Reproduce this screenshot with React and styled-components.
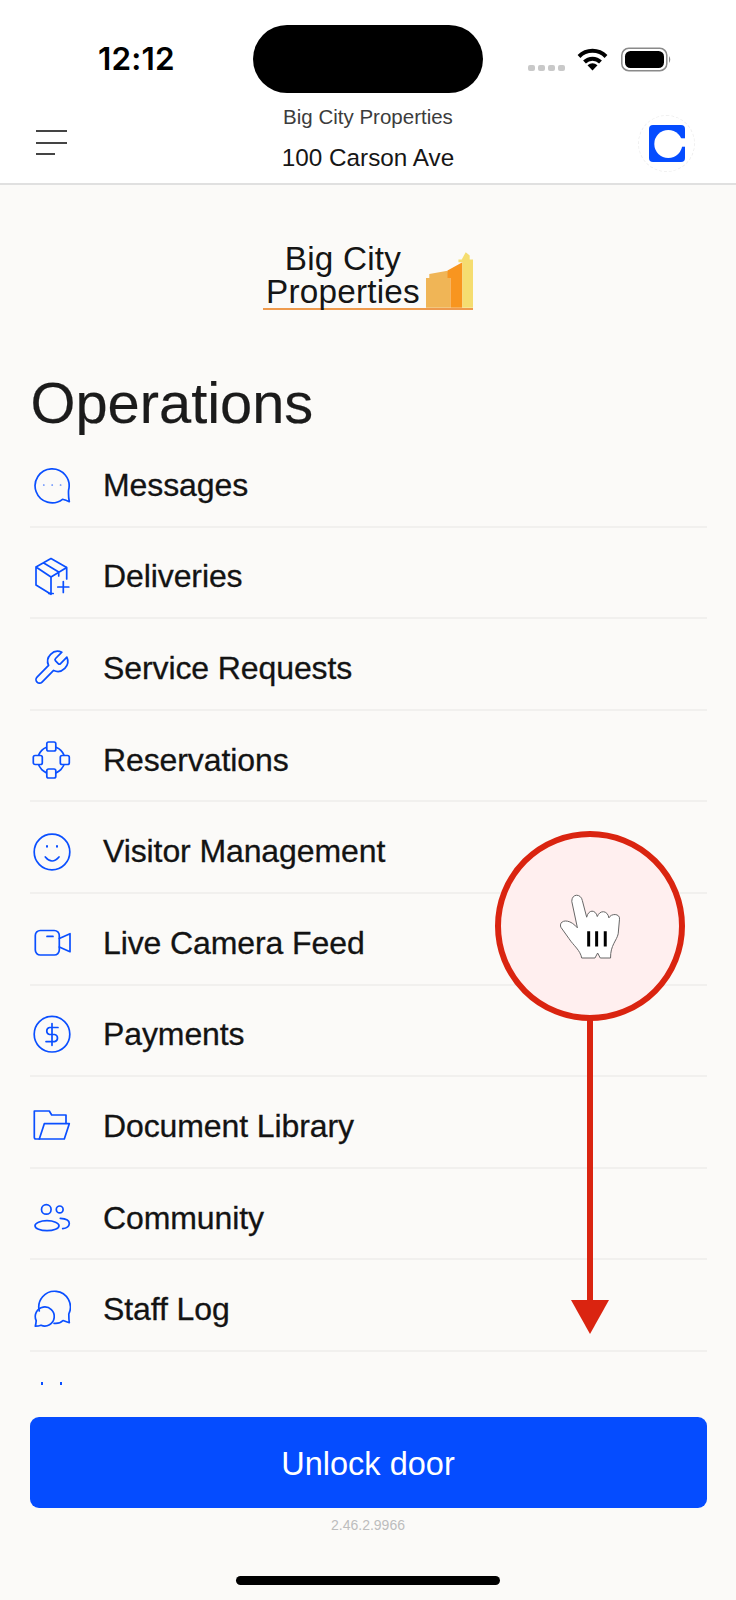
import React from "react";
import styled, { createGlobalStyle } from "styled-components";

const BLUE = "#0a4fff";
const PAGE = "#fbfaf8";
const RED = "#da2410";

const Global = createGlobalStyle`
  html, body { margin: 0; padding: 0; background: ${PAGE}; }
  * { box-sizing: border-box; }
`;

const Page = styled.div`
  position: relative;
  width: 736px;
  height: 1600px;
  overflow: hidden;
  background: ${PAGE};
  color: #111;
  font-family: "Liberation Sans", Arial, sans-serif;
  display: flex;
  flex-direction: column;
`;

const TopBar = styled.header`
  background: #fff;
  border-bottom: 2px solid #e0e0e0;
  height: 185px;
  flex: none;
`;

const StatusBar = styled.div`
  height: 93px;
  padding-top: 25px;
  display: grid;
  grid-template-columns: 253px 230px 1fr;
`;

const Time = styled.div`
  font-family: Inter, sans-serif;
  font-weight: 600;
  font-size: 31.5px;
  line-height: 68px;
  letter-spacing: 0.2px;
  padding-left: 98px;
  color: #000;
`;

const Island = styled.div`
  height: 68px;
  background: #000;
  border-radius: 34px;
`;

const StatusIcons = styled.div`
  display: flex;
  align-items: flex-start;
  padding: 22px 0 0 45px;
`;

const SignalDots = styled.div`
  display: flex;
  gap: 3px;
  margin: 18px 12px 0 0;
`;

const SignalDot = styled.span`
  width: 7px;
  height: 6px;
  border-radius: 2px;
  background: #c9c9c9;
`;

const BatteryIcon = styled.svg`
  margin-left: 13px;
`;

const NavBar = styled.div`
  height: 90px;
  display: grid;
  grid-template-columns: 160px 1fr 160px;
`;

const MenuButton = styled.div`
  display: flex;
  flex-direction: column;
  gap: 9.5px;
  padding: 37px 0 0 36px;
`;

const MenuLine = styled.span`
  display: block;
  height: 2px;
  width: ${(p) => (p.$short ? "19px" : "31px")};
  background: #444;
`;

const NavTitles = styled.div`
  text-align: center;
  padding-top: 11px;
`;

const Subtitle = styled.div`
  font-size: 20.5px;
  line-height: 26px;
  color: #3c3c3c;
`;

const Title = styled.div`
  font-size: 24.3px;
  line-height: 30px;
  margin-top: 13px;
  color: #161616;
`;

const AvatarSlot = styled.div`
  padding: 22px 0 0 62px;
`;

const Avatar = styled.div`
  width: 57px;
  height: 57px;
  border-radius: 50%;
  border: 1px dashed #efefef;
  display: flex;
  align-items: center;
  justify-content: center;
`;

const Main = styled.main`
  flex: 1;
  padding: 0 29.5px;
  display: flex;
  flex-direction: column;
  min-height: 0;
`;

const LogoWrap = styled.div`
  display: flex;
  justify-content: center;
  padding-top: 55px;
  height: 158px;
  flex: none;
`;

const Logo = styled.div`
  width: 210px;
  height: 70px;
  display: flex;
  align-items: flex-end;
  justify-content: space-between;
  border-bottom: 2px solid #ee9a4d;
  padding-left: 2px;
`;

const LogoText = styled.div`
  color: #151515;
  font-size: 33.3px;
  line-height: 33px;
  text-align: center;
  width: 156px;
`;

const LogoLine = styled.div`
  letter-spacing: ${(p) => p.$spacing || "0"};
`;

const Heading = styled.h1`
  margin: 0;
  font-weight: 400;
  font-size: 57.8px;
  line-height: 64px;
  height: 93px;
  padding: 28px 0 0 1px;
  flex: none;
  color: #1b1b1b;
  -webkit-text-stroke: 0.2px #1b1b1b;
`;

const MenuList = styled.ul`
  list-style: none;
  margin: 0;
  padding: 0;
`;

const MenuRow = styled.li`
  height: 91.6px;
  display: flex;
  align-items: center;
  gap: 32px;
  border-bottom: 2px solid #f1f0ee;
  padding: 9px 0 0 1.5px;
  font-size: 32px;
  letter-spacing: -0.1px;
  color: #131313;
  -webkit-text-stroke: 0.3px #131313;
`;

const RowIcon = styled.svg`
  flex: none;
  width: 40px;
  height: 40px;
  fill: none;
  stroke: ${BLUE};
  stroke-width: 1.7;
  stroke-linecap: round;
  stroke-linejoin: round;
`;

const ClippedRow = styled.div`
  display: flex;
  gap: 17px;
  height: 65px;
  padding: 30px 0 0 11px;
  flex: none;
`;

const ClippedDot = styled.span`
  width: 2px;
  height: 3px;
  background: ${BLUE};
`;

const UnlockButton = styled.button`
  display: block;
  width: 677px;
  height: 91px;
  flex: none;
  border: 0;
  border-radius: 9px;
  background: #054cff;
  color: #fff;
  font-family: inherit;
  font-size: 32.5px;
  padding: 5px 0 0 0;
`;

const Version = styled.div`
  text-align: center;
  font-size: 14px;
  line-height: 18px;
  margin-top: 8px;
  color: #bdbdbd;
`;

const HomeBar = styled.div`
  position: absolute;
  left: 236px;
  bottom: 15px;
  width: 264px;
  height: 9px;
  border-radius: 5px;
  background: #000;
`;

const TouchRing = styled.div`
  position: absolute;
  left: 495px;
  top: 831px;
  width: 190px;
  height: 190px;
  border-radius: 50%;
  border: 6px solid ${RED};
  background: #ffefef;
  display: flex;
  align-items: center;
  justify-content: center;
`;

const ArrowShaft = styled.div`
  position: absolute;
  left: 587px;
  top: 1020px;
  width: 6px;
  height: 282px;
  background: ${RED};
`;

const ArrowHead = styled.div`
  position: absolute;
  left: 571px;
  top: 1300px;
  width: 0;
  height: 0;
  border-left: 19.5px solid transparent;
  border-right: 19.5px solid transparent;
  border-top: 34px solid ${RED};
`;

const icons = {
  messages: (
    <>
      <path d="M31.5 34.3A17 17 0 1 1 37.6 25Q37.2 31 38.3 36.7Q35 35.3 31.5 34.3Z" />
      <g strokeWidth="1.2" strokeDasharray="0.6 7.8">
        <path d="M12.5 20H30" />
      </g>
    </>
  ),
  deliveries: (
    <>
      <path d="M35.7 22V10.5L20 1.5L5 10V28L20 37.3V20L5 10M20 20L35.7 10.5M12.3 5.8L27.7 15V19" />
      <path d="M32.3 24.5V35.5M26.8 30H37.8M17.8 36.5H22.2" />
    </>
  ),
  service: (
    <g transform="scale(1.67)" strokeWidth="1.05">
      <path d="M14.7 6.3a1 1 0 0 0 0 1.4l1.6 1.6a1 1 0 0 0 1.4 0l3.77-3.77a6 6 0 0 1-7.94 7.94l-6.91 6.91a2.12 2.12 0 0 1-3-3l6.91-6.91a6 6 0 0 1 7.94-7.94l-3.76 3.76z" />
    </g>
  ),
  reservations: (
    <>
      <circle cx="20.3" cy="20" r="13.5" />
      <g fill={PAGE}>
        <rect x="15.8" y="2" width="9" height="9" rx="1.8" />
        <rect x="15.8" y="29" width="9" height="9" rx="1.8" />
        <rect x="2.3" y="15.5" width="9" height="9" rx="1.8" />
        <rect x="29.3" y="15.5" width="9" height="9" rx="1.8" />
      </g>
    </>
  ),
  visitor: (
    <>
      <circle cx="21" cy="20" r="17.8" />
      <path d="M14.3 25Q21 33 28 25" />
      <path d="M16 14v.8M26 14v.8" strokeWidth="2" />
    </>
  ),
  camera: (
    <>
      <rect x="4.3" y="7.5" width="24" height="24.5" rx="5" />
      <path d="M16 13.4H22M28.3 15.5L39 10.7V28.7L28.3 24" />
    </>
  ),
  payments: (
    <>
      <circle cx="21" cy="19.2" r="17.8" />
      <path d="M27 12.5H18.5A3.6 3.6 0 0 0 18.5 19.5H23.5A3.6 3.6 0 0 1 23.5 26.6H15M21 8.5V30.3" />
    </>
  ),
  documents: (
    <>
      <path d="M8.3 33H5A1.7 1.7 0 0 1 3.3 31.3V5H18.3L20.7 9H35V16.8" />
      <path d="M13.3 17.7H38.3L33.3 33H8.3Z" />
    </>
  ),
  community: (
    <>
      <circle cx="15.3" cy="11.4" r="4.8" />
      <circle cx="28.7" cy="11.4" r="3.4" />
      <ellipse cx="16" cy="27.7" rx="12" ry="5" />
      <path d="M29.3 20.3Q38.3 20.8 38.3 25.5Q38 30 31.7 30.7" />
    </>
  ),
  staff: (
    <>
      <path d="M8.3 21A15.8 15.8 0 1 1 37.8 24Q37.8 29 38.3 32.7Q34.5 31.5 32 30.5Q28.5 34 23 33.3" />
      <path d="M10 35.2A9.5 9.5 0 1 0 5.2 30.6Q5 33.5 4.3 36.2Q7.5 36 10 35.2Z" />
    </>
  ),
};

const rows = [
  ["messages", "Messages"],
  ["deliveries", "Deliveries"],
  ["service", "Service Requests"],
  ["reservations", "Reservations"],
  ["visitor", "Visitor Management"],
  ["camera", "Live Camera Feed"],
  ["payments", "Payments"],
  ["documents", "Document Library"],
  ["community", "Community"],
  ["staff", "Staff Log"],
];

const App = () => (
  <Page>
    <Global />
    <TopBar>
      <StatusBar>
        <Time>12:12</Time>
        <Island />
        <StatusIcons>
          <SignalDots>
            <SignalDot />
            <SignalDot />
            <SignalDot />
            <SignalDot />
          </SignalDots>
          <svg width="31" height="25" viewBox="0 0 31 25" fill="none" stroke="#000" strokeWidth="4">
            <path d="M2 9.5A19 19 0 0 1 29 9.5" />
            <path d="M7.5 15A11.5 11.5 0 0 1 23.5 15" />
            <path d="M10.5 18.2L15.5 23.5L20.5 18.2Q15.5 14.5 10.5 18.2Z" fill="#000" stroke="none" />
          </svg>
          <BatteryIcon width="51" height="25" viewBox="0 0 51 25">
            <rect x="0.8" y="1.3" width="45" height="22.4" rx="7" fill="#fff" stroke="#8a8a8a" strokeWidth="1.5" />
            <rect x="4" y="4" width="39" height="17" rx="5.5" fill="#000" />
            <path d="M48 9Q50.5 12.5 48 16Z" fill="#8a8a8a" />
          </BatteryIcon>
        </StatusIcons>
      </StatusBar>
      <NavBar>
        <MenuButton>
          <MenuLine />
          <MenuLine />
          <MenuLine $short />
        </MenuButton>
        <NavTitles>
          <Subtitle>Big City Properties</Subtitle>
          <Title>100 Carson Ave</Title>
        </NavTitles>
        <AvatarSlot>
          <Avatar>
            <svg width="36" height="37" viewBox="0 0 36 37">
              <rect x="0" y="0" width="36" height="37" rx="4" fill="#054cff" />
              <circle cx="19.3" cy="19" r="14" fill="#fff" />
              <rect x="19.3" y="13.3" width="16.7" height="8.4" fill="#fff" />
            </svg>
          </Avatar>
        </AvatarSlot>
      </NavBar>
    </TopBar>
    <Main>
      <LogoWrap>
        <Logo>
          <LogoText>
            <LogoLine $spacing="0.2px">Big City</LogoLine>
            <LogoLine $spacing="0.2px">Properties</LogoLine>
          </LogoText>
          <svg width="47" height="56" viewBox="618 100 142 168">
            <path d="M618 268V178H628V166L683 156L692 178V268Z" fill="#f0b556" />
            <path d="M683 155L728 130V268H692V178H683Z" fill="#f8951f" />
            <path d="M716 130V122H726L738 100L750 110V122H760V268H728V130Z" fill="#f5dd70" />
          </svg>
        </Logo>
      </LogoWrap>
      <Heading>Operations</Heading>
      <MenuList>
        {rows.map(([icon, label]) => (
          <MenuRow key={icon}>
            <RowIcon viewBox="0 0 40 40">{icons[icon]}</RowIcon>
            {label}
          </MenuRow>
        ))}
      </MenuList>
      <ClippedRow>
        <ClippedDot />
        <ClippedDot />
      </ClippedRow>
      <UnlockButton>Unlock door</UnlockButton>
      <Version>2.46.2.9966</Version>
    </Main>
    <TouchRing>
      <svg width="60" height="65" viewBox="245 250 180 196">
        <path
          d="M280 272C280 248 308 248 312 270L325 320C330 296 352 296 357 318C364 298 388 298 392 322C398 308 426 308 424 326L420 370C416 390 396 405 397 443H366L358 428L350 443H310C306 420 285 405 272 385L247 350C240 330 270 320 297 352Z"
          fill="#fff"
          stroke="#666"
          strokeWidth="3"
          strokeLinejoin="round"
        />
        <path d="M331 362V408M355 362V408M381 362V408" stroke="#000" strokeWidth="9" />
      </svg>
    </TouchRing>
    <ArrowShaft />
    <ArrowHead />
    <HomeBar />
  </Page>
);

export default App;
